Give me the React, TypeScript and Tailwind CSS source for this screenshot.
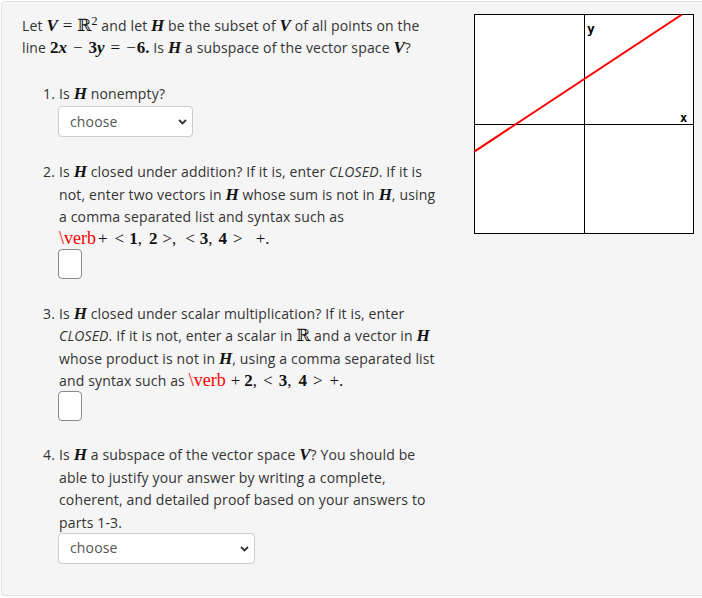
import { type ReactNode } from 'react';

const serif = "font-['Liberation_Serif','DejaVu_Serif',serif] text-[17px] leading-none tracking-normal text-[#111]";

// upright math (numbers, operators); spacing passed in per symbol
function M({ children, className = '' }: { children: ReactNode; className?: string }) {
  return <span className={`${serif} ${className}`}>{children}</span>;
}

// math variable
function I({ children }: { children: ReactNode }) {
  return <span className={`${serif} font-bold italic`}>{children}</span>;
}

function B({ children }: { children: ReactNode }) {
  return <span className={`${serif} font-bold`}>{children}</span>;
}

function Verb() {
  return <span className={`${serif} text-[18px] text-[#ff0000]`}>\verb</span>;
}

function Choose({ width }: { width: string }) {
  return (
    <div className={`relative -ml-px flex h-[31px] items-center rounded border border-[#ccc] bg-white pl-[11px] text-[#555] ${width}`}>
      choose
      <svg className="absolute right-[5px] top-[12px]" width="9" height="6" viewBox="0 0 9 6">
        <path d="M1 1l3.5 3.5L8 1" fill="none" stroke="#333" strokeWidth="1.8" />
      </svg>
    </div>
  );
}

function Blank() {
  return <div className="-ml-px h-[30px] w-[24px] rounded border border-[#8a8a8a] bg-white" />;
}

function Item({ n, children, className = '' }: { n: number; children: ReactNode; className?: string }) {
  return (
    <li className={`flex ${className}`}>
      <span className="w-[16px] shrink-0">{n}.</span>
      <div className="flex-1">{children}</div>
    </li>
  );
}

function Graph() {
  return (
    <svg width="220" height="220" viewBox="0 0 220 220" className="-mt-px shrink-0">
      <rect x="0.5" y="0.5" width="219" height="219" fill="#fff" stroke="#000" />
      <line x1="110.5" y1="0" x2="110.5" y2="220" stroke="#000" />
      <line x1="0" y1="110.5" x2="220" y2="110.5" stroke="#000" />
      <line x1="0" y1="137.8" x2="208" y2="0.5" stroke="#ff0000" strokeWidth="2" />
      <text x="113" y="19" fontSize="13" fontWeight="bold" fontFamily="DejaVu Sans Mono, monospace" fill="#000">y</text>
      <text x="206" y="108" fontSize="12" fontWeight="bold" fontFamily="DejaVu Sans Mono, monospace" fill="#000">x</text>
    </svg>
  );
}

export default function App() {
  return (
    <div className="h-[598px] w-[702px] overflow-hidden bg-white pl-px pt-px">
      <div className="flex h-[595px] w-[760px] rounded border border-[#e3e3e3] bg-[#f5f5f5] pl-[20px] pt-[13px]">
        <div className="w-[418px] whitespace-nowrap font-['Open_Sans',sans-serif] text-[14px] leading-[22.4px] tracking-[0.15px] text-[#333]">
          <p>
            Let <I>V</I>
            <M className="mx-[5px]">=</M>
            <M>
              ℝ<sup className="text-[12px]">2</sup>
            </M>{' '}
            and let <I>H</I> be the subset of <I>V</I> of all points on the
            <br />
            line <B>2</B>
            <I>x</I>
            <M className="mx-[6px]">−</M>
            <B>3</B>
            <I>y</I>
            <M className="mx-[6px]">=</M>
            <M className="mr-[1px]">−</M>
            <B>6.</B> Is <I>H</I> a subspace of the vector space <I>V</I>?
          </p>
          <ol className="mt-[23px] pl-[21px]">
            <Item n={1}>
              Is <I>H</I> nonempty?
              <div className="pt-[1px]">
                <Choose width="w-[135px]" />
              </div>
            </Item>
            <Item n={2} className="mt-[24px]">
              Is <I>H</I> closed under addition? If it is, enter <i>CLOSED</i>. If it is
              <br />
              not, enter two vectors in <I>H</I> whose sum is not in <I>H</I>, using
              <br />
              a comma separated list and syntax such as
              <br />
              <Verb />
              <M className="ml-[2px]">+</M>
              <M className="ml-[7px] mr-[5px]">&lt;</M>
              <B>1</B>
              <M className="mr-[7px]">,</M>
              <B>2</B>
              <M className="ml-[5px]">&gt;</M>
              <M>,</M>
              <M className="ml-[9px] mr-[5px]">&lt;</M>
              <B>3</B>
              <M className="mr-[6px]">,</M>
              <B>4</B>
              <M className="ml-[6px]">&gt;</M>
              <M className="ml-[13px]">+.</M>
              <div className="-mt-[2px]">
                <Blank />
              </div>
            </Item>
            <Item n={3} className="mt-[24px]">
              Is <I>H</I> closed under scalar multiplication? If it is, enter
              <br />
              <i>CLOSED</i>. If it is not, enter a scalar in <M>ℝ</M> and a vector in <I>H</I>
              <br />
              whose product is not in <I>H</I>, using a comma separated list
              <br />
              and syntax such as <Verb />
              <M className="ml-[5px] mr-[4px]">+</M>
              <B>2</B>
              <M>,</M>
              <M className="ml-[6px] mr-[6px]">&lt;</M>
              <B>3</B>
              <M className="mr-[7px]">,</M>
              <B>4</B>
              <M className="ml-[6px]">&gt;</M>
              <M className="ml-[7px]">+.</M>
              <div className="-mt-[1px]">
                <Blank />
              </div>
            </Item>
            <Item n={4} className="mt-[23px]">
              Is <I>H</I> a subspace of the vector space <I>V</I>? You should be
              <br />
              able to justify your answer by writing a complete,
              <br />
              coherent, and detailed proof based on your answers to
              <br />
              parts 1-3.
              <div className="-mt-[1px]">
                <Choose width="w-[197px]" />
              </div>
            </Item>
          </ol>
        </div>
        <div className="ml-[34px]">
          <Graph />
        </div>
      </div>
    </div>
  );
}
